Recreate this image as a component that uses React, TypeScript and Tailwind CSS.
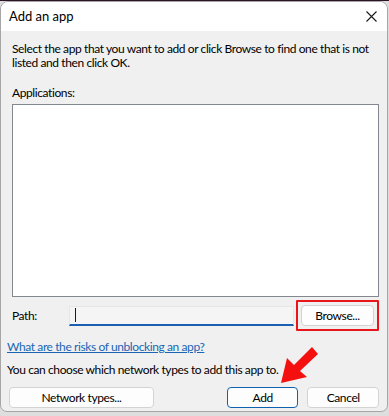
import React from "react";

function Btn({
  children,
  primary,
  className,
}: {
  children: React.ReactNode;
  primary?: boolean;
  className?: string;
}) {
  return (
    <button
      className={
        "flex h-[21px] items-center justify-center rounded-[4px] border bg-[#fdfdfd] text-[12px] tracking-[-0.4px] text-black " +
        (primary ? "border-[#1060b0] " : "border-[#d3d3d3] ") +
        (className ?? "")
      }
    >
      {children}
    </button>
  );
}

export default function App() {
  return (
    <div
      className="relative h-[416px] w-[389px] overflow-hidden border-t border-[#2a1426] bg-[#dedede]"
      style={{ fontFamily: 'Lato, "Noto Sans", sans-serif' }}
    >
      <div className="flex h-[411px] w-[388px] flex-col overflow-hidden rounded-t-[8px] rounded-b-[7px] border border-[#a6a6a6] bg-[#f0f0f0]">
        {/* title bar */}
        <div className="flex h-[29px] shrink-0 items-center justify-between bg-white pl-[8px] pr-[10px]">
          <span className="text-[13px] text-black">Add an app</span>
          <svg width="11" height="11" viewBox="0 0 11 11">
            <path d="M0.5 0.5L10.5 10.5M10.5 0.5L0.5 10.5" stroke="#1a1a1a" strokeWidth="1.1" />
          </svg>
        </div>

        <div className="flex flex-1 flex-col pl-[11px] pr-[8px] pt-[11px] text-[12px] leading-[13px] tracking-[-0.4px] text-black">
          <p className="leading-[14px]">
            Select the app that you want to add or click Browse to find one that is not
            <br />
            listed and then click OK.
          </p>

          <div className="mt-[16px]">Applications:</div>

          <div className="mt-[5px] h-[193px] w-[367px] border border-[#828790] bg-white" />

          {/* path row */}
          <div className="mt-[3px] flex items-center">
            <span className="w-[58px]">Path:</span>
            <div className="flex h-[20px] w-[227px] items-center border border-b-2 border-[#e6e6e6] border-b-[#1b5fb0] bg-[#f5f5f5] px-[5px]">
              <div className="h-[14px] w-[1px] bg-[#2a1020]" />
            </div>
            <div className="ml-[2px] rounded-[1px] border-2 border-[#e8151b] p-[3px]">
              <Btn className="w-[73px]">Browse...</Btn>
            </div>
          </div>

          <a className="-ml-[5px] mt-[9px] text-[#1a66b5] underline">
            What are the risks of unblocking an app?
          </a>

          <div className="-ml-[5px] mt-[10px]">
            You can choose which network types to add this app to.
          </div>

          <div className="-ml-[3px] mt-[11px] flex">
            <Btn className="w-[146px]">Network types...</Btn>
            <Btn primary className="ml-[73px] w-[72px]">
              Add
            </Btn>
            <Btn className="ml-[9px] w-[72px]">Cancel</Btn>
          </div>
        </div>
      </div>

      {/* red arrow annotation */}
      <svg
        className="absolute left-[275px] top-[339px]"
        width="50"
        height="50"
        viewBox="0 0 50 50"
      >
        <path
          d="M6 43 L12 18 L19 25 L37 7 L43 14 L25 31 L32 37 Z"
          fill="#f51010"
        />
      </svg>
    </div>
  );
}
